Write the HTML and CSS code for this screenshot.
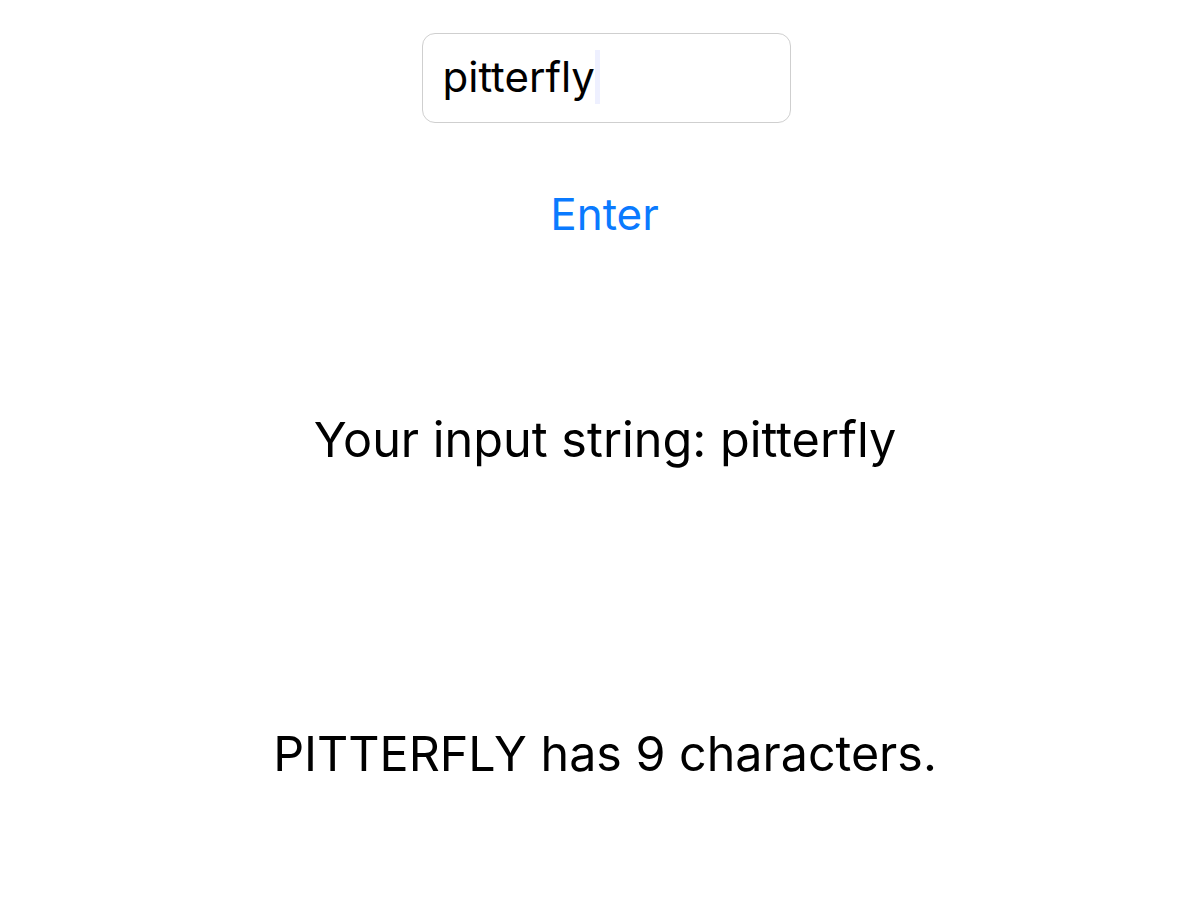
FILE: index.html
```html
<!DOCTYPE html>
<html>
<head>
<meta charset="utf-8">
<link rel="stylesheet" href="styles.css">
</head>
<body>
<main class="screen">
  <div class="field"><span class="field-text">pitterfly</span><span class="caret"></span></div>
  <div class="button">Enter</div>
  <p class="line line-input">Your input string: pitterfly</p>
  <p class="line line-count">PITTERFLY has 9 characters.</p>
</main>
</body>
</html>
```
FILE: styles.css
```css
html, body {
  margin: 0;
  padding: 0;
  background: #ffffff;
}
body {
  font-family: Inter, "Noto Sans", sans-serif;
  color: #000;
}
.screen {
  width: 1200px;
  height: 906px;
  display: flex;
  flex-direction: column;
  align-items: center;
  padding-top: 33px;
  box-sizing: border-box;
}
.field {
  width: 369px;
  height: 90px;
  box-sizing: border-box;
  border: 1px solid #cfcfcf;
  border-radius: 13px;
  margin-left: 12px;
  display: flex;
  align-items: center;
  padding-left: 20px;
  padding-bottom: 4px;
  font-size: 42px;
}
.caret {
  width: 5px;
  height: 54px;
  background: #eef0ff;
  margin-top: 2px;
}
.button {
  margin-top: 63px;
  margin-left: 9px;
  color: #0a7aff;
  font-size: 44px;
  line-height: 56px;
}
.line {
  margin: 0;
  font-size: 48.6px;
  line-height: 60px;
}
.line-input {
  margin-top: 168px;
  margin-left: 10px;
}
.line-count {
  margin-top: 254px;
  margin-left: 10px;
  font-size: 48.4px;
}
```
